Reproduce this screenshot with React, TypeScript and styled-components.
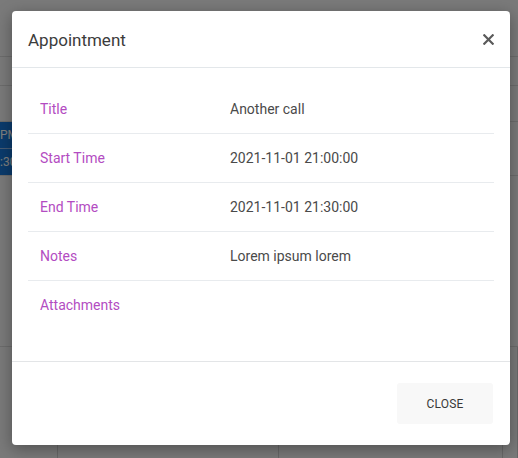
import { FC } from "react";
import styled, { createGlobalStyle } from "styled-components";

const GlobalStyle = createGlobalStyle`
  html, body {
    margin: 0;
    padding: 0;
  }
  body {
    font-family: Roboto, "Liberation Sans", sans-serif;
    overflow: hidden;
  }
`;

const Page = styled.div`
  position: relative;
  width: 518px;
  height: 458px;
  background: #f4f4f4;
  overflow: hidden;
`;

const Calendar = styled.div`
  display: grid;
  grid-template-rows: 57px 29px 36px 54px 171px 111px;
  height: 100%;
`;

const CalendarRow = styled.div`
  border-bottom: 1px solid #d8d8d8;
  display: flex;
`;

const Event = styled.div`
  width: 14px;
  background: #1677d8;
  color: #fff;
  font-size: 12px;
  display: flex;
  flex-direction: column;
  overflow: hidden;
  white-space: nowrap;
  line-height: 26px;
`;

const EventLine = styled.span`
  & + & {
    border-top: 1px solid #8fb8e8;
  }
`;

const BottomRow = styled.div`
  display: grid;
  grid-template-columns: 58px 221px 224px 1fr;
  & > div {
    border-right: 1px solid #d0d0d0;
  }
`;

const Backdrop = styled.div`
  position: absolute;
  inset: 0;
  background: rgba(0, 0, 0, 0.5);
`;

const Modal = styled.div`
  position: absolute;
  left: 12px;
  top: 11px;
  width: 498px;
  height: 434px;
  background: #fff;
  border-radius: 4px;
  box-shadow: 0 4px 16px rgba(0, 0, 0, 0.35);
  display: flex;
  flex-direction: column;
`;

const Header = styled.div`
  height: 57px;
  box-sizing: border-box;
  display: flex;
  align-items: center;
  justify-content: space-between;
  padding: 0 16px;
  border-bottom: 1px solid #e3e7ea;
`;

const Title = styled.h2`
  margin: 0;
  font-size: 17px;
  font-weight: 400;
  color: #3c3c3c;
  padding-top: 1px;
`;

const CloseIcon = styled.button`
  border: 0;
  background: none;
  padding: 0;
  margin-right: 0;
  cursor: pointer;
  display: flex;
`;

const Body = styled.div`
  flex: 1;
  padding: 16px 16px 32px;
`;

const Row = styled.div`
  display: grid;
  grid-template-columns: 190px 1fr;
  height: 49px;
  align-items: center;
  padding: 0 12px;
  box-sizing: border-box;
  font-size: 14px;

  & + & {
    border-top: 1px solid #e8ebee;
  }
`;

const Label = styled.span`
  color: #b34cc2;
`;

const Value = styled.span`
  color: #4a4a4a;
`;

const Footer = styled.div`
  height: 84px;
  box-sizing: border-box;
  border-top: 1px solid #e3e5e7;
  display: flex;
  align-items: center;
  justify-content: flex-end;
  padding: 0 17px 0 16px;
`;

const Button = styled.button`
  width: 96px;
  height: 41px;
  border: 0;
  border-radius: 3px;
  background: #f8f8f8;
  color: #383838;
  font-family: Roboto, "Liberation Sans", sans-serif;
  font-size: 12px;
  text-transform: uppercase;
  letter-spacing: 0.2px;
  cursor: pointer;
  margin-top: 0;
`;

const fields: [string, string][] = [
  ["Title", "Another call"],
  ["Start Time", "2021-11-01 21:00:00"],
  ["End Time", "2021-11-01 21:30:00"],
  ["Notes", "Lorem ipsum lorem"],
  ["Attachments", ""],
];

const App: FC = () => {
  return (
    <Page>
      <GlobalStyle />
      <Calendar>
        <CalendarRow />
        <CalendarRow />
        <CalendarRow />
        <CalendarRow>
          <Event>
            <EventLine>PM</EventLine>
            <EventLine>:30</EventLine>
          </Event>
        </CalendarRow>
        <CalendarRow />
        <BottomRow>
          <div />
          <div />
          <div />
          <div />
        </BottomRow>
      </Calendar>
      <Backdrop />
      <Modal>
        <Header>
          <Title>Appointment</Title>
          <CloseIcon aria-label="Close">
            <svg width="11" height="11" viewBox="0 0 11 11">
              <path
                d="M1.3 1.3 L9.7 9.7 M9.7 1.3 L1.3 9.7"
                stroke="#5a5a5a"
                strokeWidth="2.2"
                strokeLinecap="square"
              />
            </svg>
          </CloseIcon>
        </Header>
        <Body>
          {fields.map(([label, value]) => (
            <Row key={label}>
              <Label>{label}</Label>
              <Value>{value}</Value>
            </Row>
          ))}
        </Body>
        <Footer>
          <Button>Close</Button>
        </Footer>
      </Modal>
    </Page>
  );
};

export default App;
